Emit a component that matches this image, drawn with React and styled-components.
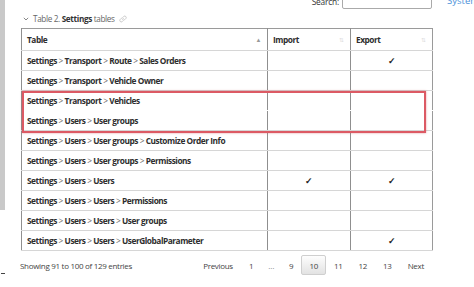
import React from "react";
import styled, { createGlobalStyle } from "styled-components";

const Global = createGlobalStyle`
  html, body { margin: 0; padding: 0; background: #fff; }
  body { font-family: "Open Sans", "Noto Sans", sans-serif; color: #333; overflow: hidden; }
`;

const Page = styled.div`
  display: flex;
  width: 474px;
  height: 287px;
  overflow: hidden;
`;

const Rail = styled.div`
  width: 21px;
  flex: none;
  display: flex;
  flex-direction: column;
  justify-content: space-between;
  padding-bottom: 13px;
  box-sizing: border-box;
`;

const RailThumb = styled.div`
  width: 5px;
  height: 210px;
  background: #c9c9c9;
`;

const RailArrow = styled.div`
  width: 4px;
  height: 1px;
  margin-left: 1px;
  background: #444;
`;

const Main = styled.div`
  display: flex;
  flex-direction: column;
  width: 453px;
  flex: none;
`;

const TopBar = styled.div`
  display: flex;
  align-items: flex-end;
  height: 9px;
`;

const SearchLabel = styled.label`
  margin-left: auto;
  font-size: 8.4px;
  letter-spacing: -0.2px;
  color: #333;
  line-height: 9px;
  margin-bottom: 3px;
  margin-right: 3px;
  white-space: nowrap;
`;

const SearchInput = styled.div`
  flex: none;
  box-sizing: border-box;
  width: 90px;
  height: 22px;
  border: 1px solid #aaa;
  border-radius: 2px;
`;

const SideLink = styled.span`
  flex: none;
  margin-left: 15px;
  width: 27px;
  overflow: hidden;
  font-size: 9.5px;
  line-height: 10px;
  color: #4a90d9;
  margin-bottom: 3px;
  white-space: nowrap;
`;

const Caption = styled.div`
  display: flex;
  align-items: center;
  gap: 4px;
  height: 19px;
  font-size: 8.2px;
  letter-spacing: -0.35px;
  color: #666;
  padding-left: 2px;
`;

const Bold = styled.b`
  color: #333;
  font-weight: 700;
`;

const TableWrap = styled.div`
  position: relative;
  width: 411px;
`;

const Table = styled.table`
  width: 411px;
  border-collapse: collapse;
  table-layout: fixed;
  border: 1px solid #9a9a9a;
  font-size: 8.3px;
  letter-spacing: -0.45px;
  font-weight: 700;
  color: #2e2e2e;
`;

const Col = styled.col`
  width: ${(p) => p.$w}px;
`;

const Th = styled.th`
  height: 21px;
  padding: 0 5px;
  text-align: left;
  border-left: 1px solid #8f8f8f;
  border-bottom: 1px solid #d6d6d6;
  position: relative;
  font-weight: 700;
`;

const SortMark = styled.span`
  position: absolute;
  right: 6px;
  top: 7px;
  font-size: 6px;
  color: ${(p) => (p.$active ? "#999" : "#ddd")};
  font-weight: 400;
`;

const Td = styled.td`
  height: 19px;
  padding: 0 5px;
  border-left: 1px solid #8f8f8f;
  border-bottom: 1px solid ${(p) => (p.$open ? "transparent" : "#d6d6d6")};
  text-align: ${(p) => (p.$center ? "center" : "left")};
  white-space: nowrap;
`;

const Sep = styled.span`
  font-weight: 400;
  color: #666;
`;

const Check = styled.span`
  font-weight: 700;
  font-size: 9px;
  color: #222;
`;

const Highlight = styled.div`
  position: absolute;
  left: 1px;
  top: 63px;
  width: 400px;
  height: 38px;
  border: 2px solid #dc5a64;
  box-shadow: 0 0 2px rgba(200, 60, 70, 0.5);
  pointer-events: none;
`;

const Footer = styled.div`
  display: flex;
  align-items: center;
  height: 22px;
  margin-top: 3px;
  font-size: 8px;
  letter-spacing: -0.3px;
  color: #444;
`;

const Info = styled.div`
  margin-left: -1px;
`;

const Pager = styled.div`
  display: flex;
  align-items: center;
  margin-left: auto;
  margin-right: 42px;
`;

const PageBtn = styled.span`
  box-sizing: border-box;
  height: 20px;
  display: flex;
  align-items: center;
  padding: 0 7px;
  border: 1px solid ${(p) => (p.$current ? "#cfcfcf" : "transparent")};
  border-radius: 2px;
  background: ${(p) => (p.$current ? "linear-gradient(#fdfdfd, #e2e2e2)" : "transparent")};
  color: #444;
`;

const Ellipsis = styled.span`
  padding: 0 7px;
  color: #888;
`;

const LinkIcon = () => (
  <svg width="8" height="8" viewBox="0 0 16 16" fill="none" stroke="#c4c4c4" strokeWidth="1.8" strokeLinecap="round">
    <path d="M7 9.5a3 3 0 0 0 4.2 0l2.6-2.6a3 3 0 0 0-4.2-4.2L8.4 3.9" />
    <path d="M9 6.5a3 3 0 0 0-4.2 0L2.2 9.1a3 3 0 0 0 4.2 4.2l1.2-1.2" />
  </svg>
);

const Chevron = () => (
  <svg width="6" height="4" viewBox="0 0 6 4" fill="none" stroke="#888" strokeWidth="1">
    <path d="M0.8 0.8 3 3 5.2 0.8" />
  </svg>
);

const rows = [
  { path: ["Settings", "Transport", "Route", "Sales Orders"], exp: true },
  { path: ["Settings", "Transport", "Vehicle Owner"] },
  { path: ["Settings", "Transport", "Vehicles"], open: true },
  { path: ["Settings", "Users", "User groups"] },
  { path: ["Settings", "Users", "User groups", "Customize Order Info"] },
  { path: ["Settings", "Users", "User groups", "Permissions"] },
  { path: ["Settings", "Users", "Users"], imp: true, exp: true },
  { path: ["Settings", "Users", "Users", "Permissions"] },
  { path: ["Settings", "Users", "Users", "User groups"] },
  { path: ["Settings", "Users", "Users", "UserGlobalParameter"], exp: true },
];

const Crumbs = ({ path }) =>
  path.map((p, i) => (
    <React.Fragment key={i}>
      {i > 0 && <Sep> &gt; </Sep>}
      {p}
    </React.Fragment>
  ));

export default function App() {
  return (
    <Page>
      <Global />
      <Rail>
        <RailThumb />
        <RailArrow />
      </Rail>
      <Main>
        <TopBar>
          <SearchLabel>Search:</SearchLabel>
          <SearchInput />
          <SideLink>System</SideLink>
        </TopBar>
        <Caption>
          <Chevron />
          <span>
            Table 2. <Bold>Settings</Bold> tables
          </span>
          <LinkIcon />
        </Caption>
        <TableWrap>
          <Table>
            <colgroup>
              <Col $w={246} />
              <Col $w={83} />
              <Col $w={82} />
            </colgroup>
            <thead>
              <tr>
                <Th>
                  Table<SortMark $active>▲</SortMark>
                </Th>
                <Th>
                  Import<SortMark>⇅</SortMark>
                </Th>
                <Th>
                  Export<SortMark>⇅</SortMark>
                </Th>
              </tr>
            </thead>
            <tbody>
              {rows.map((r, i) => (
                <tr key={i}>
                  <Td $open={r.open}>
                    <Crumbs path={r.path} />
                  </Td>
                  <Td $center $open={r.open}>{r.imp && <Check>✓</Check>}</Td>
                  <Td $center $open={r.open}>{r.exp && <Check>✓</Check>}</Td>
                </tr>
              ))}
            </tbody>
          </Table>
          <Highlight />
        </TableWrap>
        <Footer>
          <Info>Showing 91 to 100 of 129 entries</Info>
          <Pager>
            <PageBtn>Previous</PageBtn>
            <PageBtn>1</PageBtn>
            <Ellipsis>…</Ellipsis>
            <PageBtn>9</PageBtn>
            <PageBtn $current>10</PageBtn>
            <PageBtn>11</PageBtn>
            <PageBtn>12</PageBtn>
            <PageBtn>13</PageBtn>
            <PageBtn>Next</PageBtn>
          </Pager>
        </Footer>
      </Main>
    </Page>
  );
}
